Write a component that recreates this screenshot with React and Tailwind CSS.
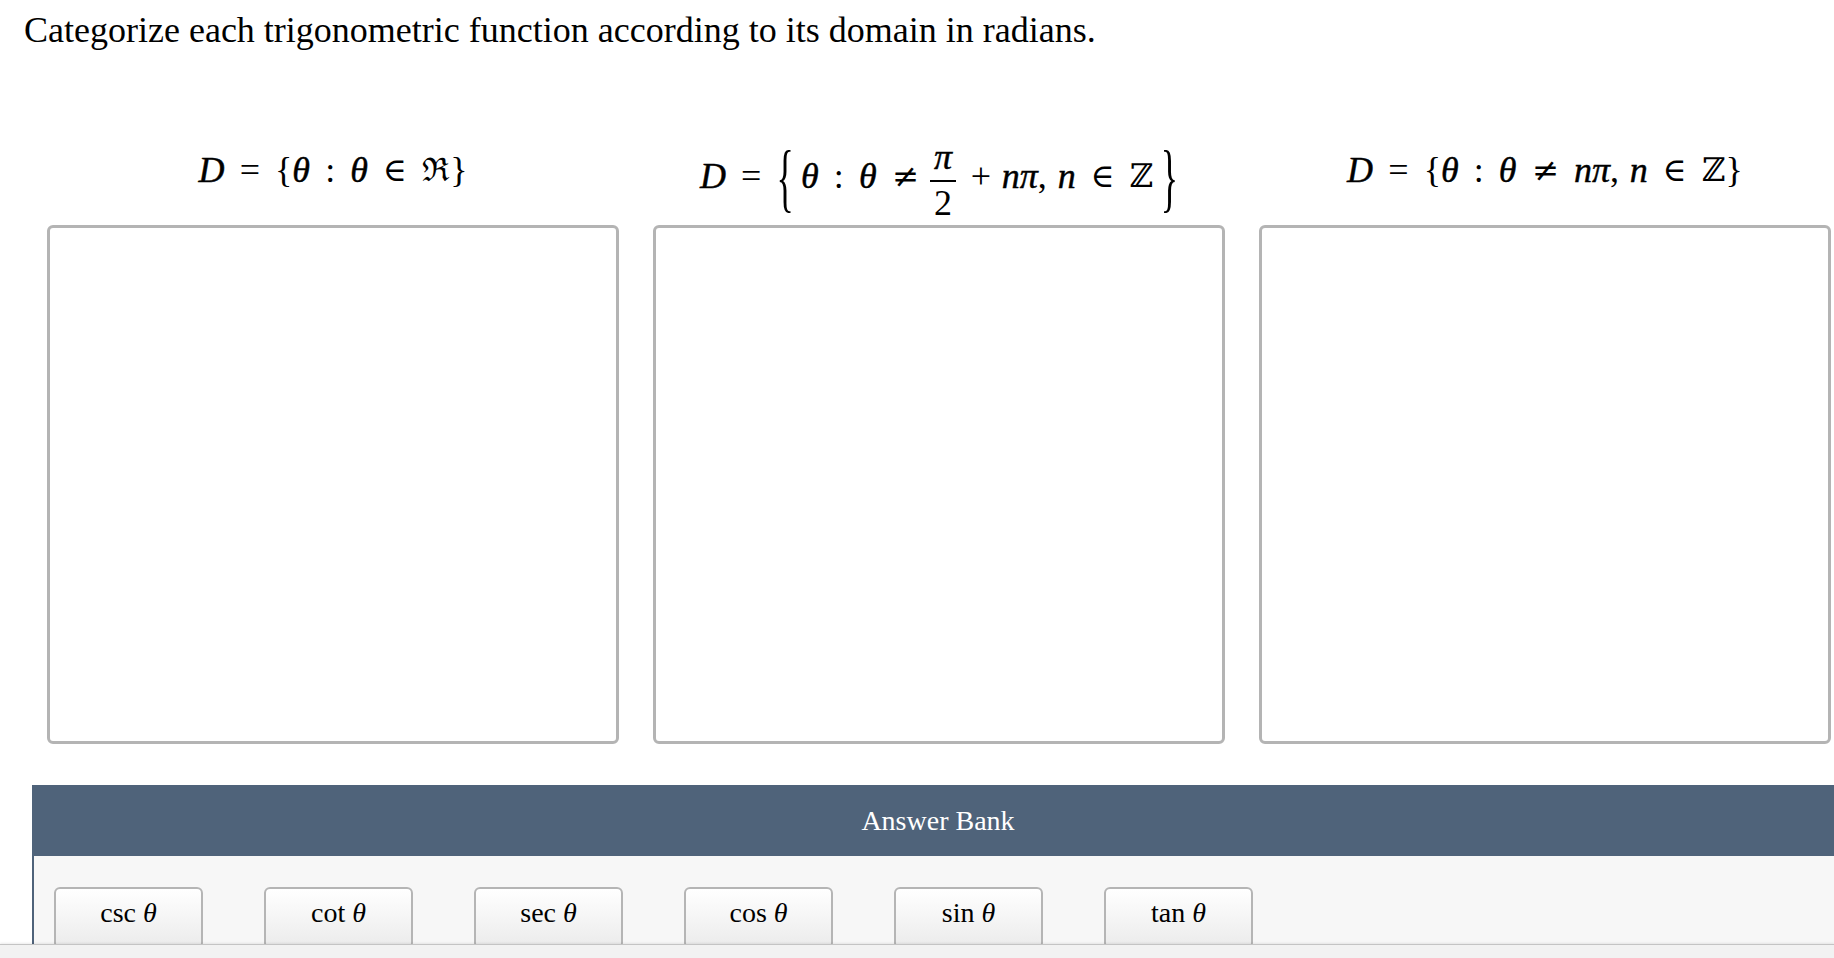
import React from 'react';

const serif = 'font-["Liberation_Serif","DejaVu_Serif","Times_New_Roman",serif]';

// math spaces
function Sp({ w = 'thick' }) {
    const cls = {
        thin: 'w-[0.2em]',
        med: 'w-[0.3em]',
        thick: 'w-[0.42em]',
    }[w];
    return <span className={`inline-block ${cls}`} />;
}

function I({ children }) {
    return <span className="italic [-webkit-text-stroke:0.45px_black]">{children}</span>;
}

function Sym({ children }) {
    return <span className='font-["DejaVu_Serif","Liberation_Serif",serif] text-[0.9em]'>{children}</span>;
}

function Fraction({ top, bottom }) {
    return (
        <span className="inline-flex flex-col items-center mx-[0.12em] translate-y-[4px]">
            <span className="leading-[1.25] px-[0.1em]">{top}</span>
            <span className="block w-full h-[2px] bg-black" />
            <span className="leading-[1.2] px-[0.1em]">{bottom}</span>
        </span>
    );
}

function BigBrace({ children }) {
    return <span className="inline-block scale-y-[2.1] leading-none translate-y-[2px]">{children}</span>;
}

function LabelReal() {
    return (
        <div className="flex items-center whitespace-nowrap">
            <I>D</I><Sp /><span>=</span><Sp />
            <span>{'{'}</span><I>θ</I><Sp /><span>:</span><Sp /><I>θ</I><Sp />
            <Sym>∈</Sym><Sp /><Sym>ℜ</Sym><span>{'}'}</span>
        </div>
    );
}

function LabelHalfPi() {
    return (
        <div className="flex items-center whitespace-nowrap mt-[12px]">
            <I>D</I><Sp /><span>=</span><Sp />
            <BigBrace>{'{'}</BigBrace><Sp w="thin" />
            <I>θ</I><Sp /><span>:</span><Sp /><I>θ</I><Sp />
            <Sym>≠</Sym><Sp w="thin" />
            <Fraction top={<I>π</I>} bottom="2" />
            <Sp w="med" /><span>+</span><Sp w="med" />
            <I>n</I><I>π</I><span>,</span><Sp w="med" /><I>n</I><Sp />
            <Sym>∈</Sym><Sp /><Sym>ℤ</Sym>
            <Sp w="thin" /><BigBrace>{'}'}</BigBrace>
        </div>
    );
}

function LabelNPi() {
    return (
        <div className="flex items-center whitespace-nowrap">
            <I>D</I><Sp /><span>=</span><Sp />
            <span>{'{'}</span><I>θ</I><Sp /><span>:</span><Sp /><I>θ</I><Sp />
            <Sym>≠</Sym><Sp /><I>n</I><I>π</I><span>,</span><Sp w="med" /><I>n</I><Sp />
            <Sym>∈</Sym><Sp /><Sym>ℤ</Sym><span>{'}'}</span>
        </div>
    );
}

const columns = [
    { id: 'real', label: <LabelReal /> },
    { id: 'halfpi', label: <LabelHalfPi /> },
    { id: 'npi', label: <LabelNPi /> },
];

const answers = ['csc', 'cot', 'sec', 'cos', 'sin', 'tan'];

function DropBox() {
    return (
        <div className="h-[519px] rounded-[6px] border-[3px] border-[#b4b4b4] bg-white" />
    );
}

function AnswerChip({ fn }) {
    return (
        <button
            type="button"
            className="w-[149px] h-[62px] shrink-0 rounded-[6px] border-2 border-[#b5b5b5] bg-gradient-to-b from-white to-[#ebebeb] text-[28px] text-black flex items-center justify-center pb-[10px]"
        >
            {fn}&nbsp;<span className="italic">θ</span>
        </button>
    );
}

export default function App() {
    return (
        <div className={`relative h-screen w-full overflow-hidden bg-white text-black ${serif}`}>

            <h1 className="pl-[24px] pt-[12px] text-[36px] leading-none font-normal">
                Categorize each trigonometric function according to its domain in radians.
            </h1>

            {/* Categories */}

            <div className="flex gap-[34px] pl-[47px] mt-[89px]">
                {columns.map((col) => (
                    <div key={col.id} className="w-[572px] shrink-0 flex flex-col">
                        <div className="h-[88px] pb-[22px] flex items-center justify-center text-[36px] leading-none">
                            {col.label}
                        </div>
                        <DropBox />
                    </div>
                ))}
            </div>

            {/* Answer bank */}

            <div className="ml-[32px] mt-[41px] w-[1812px]">
                <div className="h-[71px] bg-[#4f637a] text-white text-[28px] flex items-center justify-center">
                    Answer Bank
                </div>
                <div className="bg-[#f7f7f7] border-l-2 border-[#4f637a] pt-[31px] pl-[20px] pb-[20px] flex gap-[61px]">
                    {answers.map((fn) => (
                        <AnswerChip key={fn} fn={fn} />
                    ))}
                </div>
            </div>

            <div className="absolute left-0 right-0 bottom-0 h-[14px] bg-[#f2f2f2] border-t border-[#c4c4c4] shadow-[0_-1px_2px_rgba(0,0,0,0.08)]" />
        </div>
    );
}
